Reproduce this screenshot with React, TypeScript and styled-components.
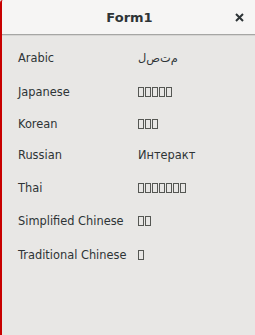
import { ReactElement } from 'react';
import styled, { createGlobalStyle } from 'styled-components';

/** Interfaces */
interface RowProps {
    height: number;
}

interface Entry {
    label: string;
    value: string;
    height: number;
    tofu?: boolean;
}

/** Data */
const entries: Entry[] = [
    { label: 'Arabic', value: 'م\u200Cت\u200Cص\u200Cل', height: 34 },
    { label: 'Japanese', value: 'オンライン', height: 33, tofu: true },
    { label: 'Korean', value: '온라인', height: 31, tofu: true },
    { label: 'Russian', value: 'Интеракт', height: 32 },
    { label: 'Thai', value: 'ออนไลน์', height: 33, tofu: true },
    { label: 'Simplified Chinese', value: '连接', height: 34, tofu: true },
    { label: 'Traditional Chinese', value: '連', height: 34, tofu: true },
];

/** Styled Components */
const GlobalStyle = createGlobalStyle`
    html, body {
        margin: 0;
        padding: 0;
        background: #e8e7e5;
    }
    body {
        font-family: 'DejaVu Sans', 'Noto Sans', sans-serif;
    }
`;

const Window = styled.div`
    width: 255px;
    height: 335px;
    display: flex;
    flex-direction: column;
    background: #e8e7e5;
    border-left: 2px solid #c80000;
    border-top-left-radius: 3px;
    box-sizing: border-box;
    overflow: hidden;
`;

const TitleBar = styled.div`
    height: 34px;
    flex-shrink: 0;
    display: flex;
    align-items: center;
    justify-content: center;
    position: relative;
    background: #f6f5f4;
    border-bottom: 1px solid #a6a6a4;
    box-shadow: 0 1px 0 #d6d5d3;
`;

const Title = styled.div`
    font-size: 13px;
    font-weight: 600;
    color: #2e3436;
    margin-left: 2px;
`;

const CloseButton = styled.div`
    position: absolute;
    right: 11px;
    top: 12px;
    width: 10px;
    height: 10px;
    display: flex;
    align-items: center;
    justify-content: center;
`;

const Content = styled.div`
    padding: 6px 0 0 16px;
    display: flex;
    flex-direction: column;
`;

const Row = styled.div<RowProps>`
    height: ${(props) => props.height}px;
    display: grid;
    grid-template-columns: 120px 1fr;
    align-items: center;
    font-size: 11.4px;
    color: #2e3436;
`;

const Label = styled.span`
    white-space: nowrap;
`;

const Value = styled.span`
    white-space: nowrap;
    display: flex;
    align-items: center;
`;

const Tofu = styled.span`
    display: inline-block;
    width: 6px;
    height: 10px;
    box-sizing: border-box;
    border: 1px solid #555753;
    margin-right: 1px;
`;

/**
 * Form Window Component
 */
const App = (): ReactElement => (
    <>
        <GlobalStyle />
        <Window>
            <TitleBar>
                <Title>Form1</Title>
                <CloseButton>
                    <svg width="9" height="9" viewBox="0 0 9 9">
                        <path
                            d="M1 1 L8 8 M8 1 L1 8"
                            stroke="#2e3436"
                            strokeWidth="2"
                        />
                    </svg>
                </CloseButton>
            </TitleBar>
            <Content>
                {entries.map((entry) => (
                    <Row key={entry.label} height={entry.height}>
                        <Label>{entry.label}</Label>
                        <Value aria-label={entry.value}>
                            {entry.tofu
                                ? Array.from(entry.value).map((ch, i) => (
                                      <Tofu key={i} title={ch} />
                                  ))
                                : entry.value}
                        </Value>
                    </Row>
                ))}
            </Content>
        </Window>
    </>
);

export default App;
